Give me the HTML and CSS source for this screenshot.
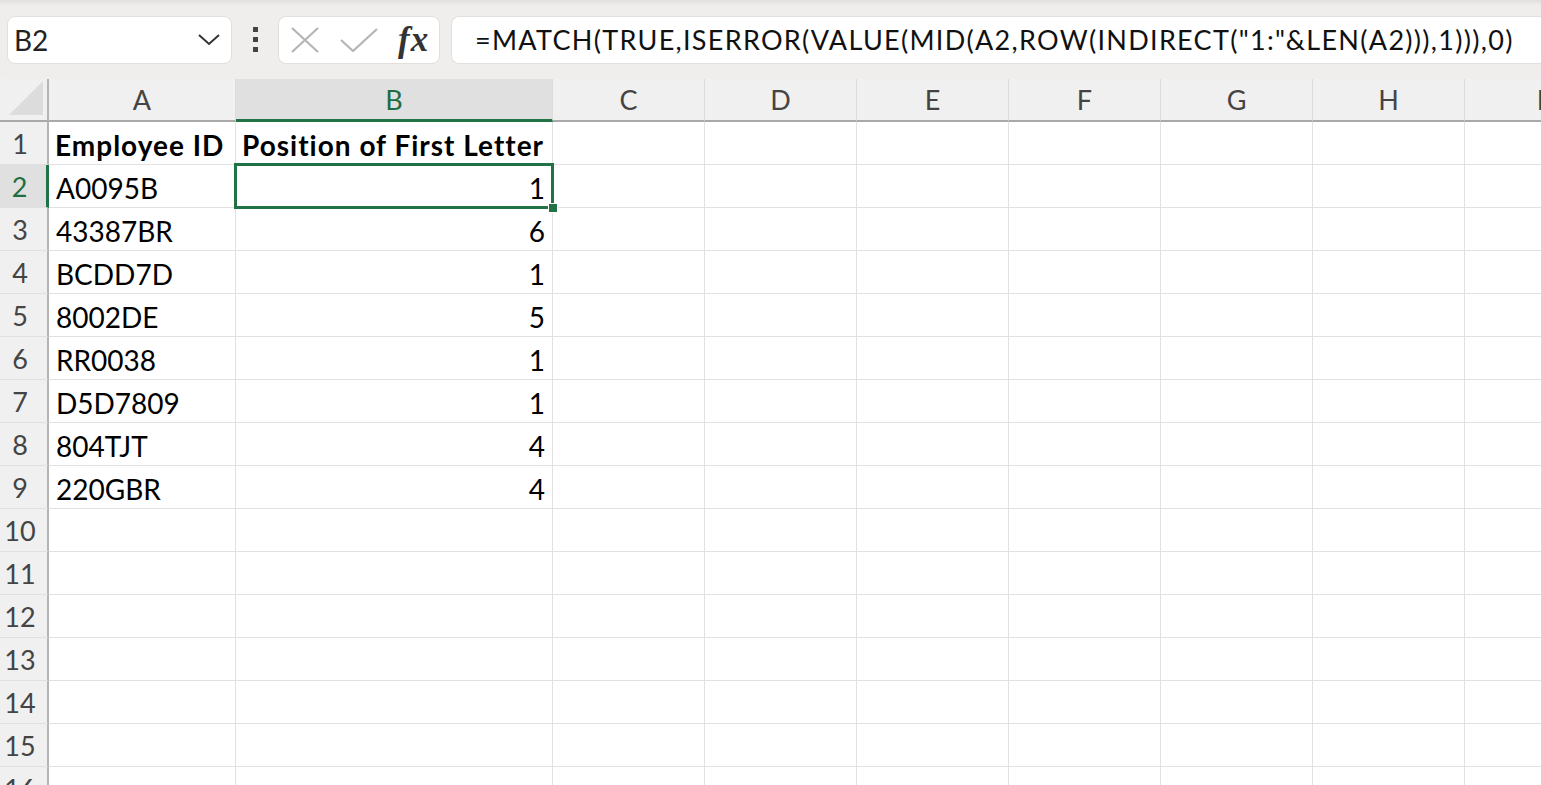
FILE: index.html
```html
<!DOCTYPE html>
<html lang="en">
<head>
    <meta charset="UTF-8">
    <title>Excel - Position of First Letter</title>
    <link rel="stylesheet" href="styles.css">
</head>
<body>

    <!-- Formula bar -->
    <div class="toolbar">
        <div class="name-box">
            <span>B2</span>
            <svg width="22" height="12" viewBox="0 0 22 12"><path d="M1 1 L11 10 L21 1" fill="none" stroke="#333" stroke-width="2"/></svg>
        </div>
        <div class="dots"><i></i><i></i><i></i></div>
        <div class="fx-box">
            <svg width="30" height="26" viewBox="0 0 30 26"><path d="M2 1 L28 25 M28 1 L2 25" stroke="#b5b5b5" stroke-width="2.2"/></svg>
            <svg width="38" height="24" viewBox="0 0 38 24"><path d="M1 12 L13 23 L37 1" fill="none" stroke="#b5b5b5" stroke-width="2.2"/></svg>
            <span class="fx">fx</span>
        </div>
        <div class="formula">=MATCH(TRUE,ISERROR(VALUE(MID(A2,ROW(INDIRECT("1:"&amp;LEN(A2))),1))),0)</div>
    </div>

    <!-- Sheet -->
    <div class="sheet" id="sheet"></div>

    <script>
        var cols = ['A', 'B', 'C', 'D', 'E', 'F', 'G', 'H', 'I'];
        var data = [
            ['Employee ID', 'Position of First Letter'],
            ['A0095B', 1],
            ['43387BR', 6],
            ['BCDD7D', 1],
            ['8002DE', 5],
            ['RR0038', 1],
            ['D5D7809', 1],
            ['804TJT', 4],
            ['220GBR', 4]
        ];
        var sheet = document.getElementById('sheet');
        var html = '<div class="row head"><div class="corner"><span></span></div>';
        cols.forEach(function (c) {
            html += '<div class="col-head' + (c === 'B' ? ' active' : '') + '">' + c + '</div>';
        });
        html += '</div>';

        for (var r = 1; r <= 16; r++) {
            var vals = data[r - 1] || [];
            html += '<div class="row"><div class="row-head' + (r === 2 ? ' active' : '') + '">' + r + '</div>';
            cols.forEach(function (c, i) {
                var v = vals[i];
                var cls = 'cell';
                if (r === 1 && v !== undefined) cls += ' bold';
                if (typeof v === 'number') cls += ' num';
                if (r === 2 && c === 'B') cls += ' selected';
                html += '<div class="' + cls + '">' + (v === undefined ? '' : v) + '</div>';
            });
            html += '</div>';
        }
        sheet.innerHTML = html;
    </script>

</body>
</html>
```

FILE: styles.css
```css
body {
    margin: 0;
    padding: 0;
    font-family: Lato, "Open Sans", sans-serif;
    background-color: #fff;
    overflow: hidden;
    width: 1541px;
    height: 785px;
}
.toolbar {
    height: 79px;
    background-color: #f0eeec;
    box-shadow: inset 0 5px 4px -3px rgba(0, 0, 0, 0.08);
    display: flex;
    align-items: center;
    padding-left: 7px;
    box-sizing: border-box;
}
.name-box {
    width: 225px;
    height: 48px;
    background-color: #fff;
    border: 1px solid #e3e0dc;
    border-radius: 8px;
    box-sizing: border-box;
    display: flex;
    align-items: center;
    justify-content: space-between;
    padding: 0 11px 0 6px;
    font-size: 28px;
    color: #222;
}
.dots {
    width: 46px;
    display: flex;
    flex-direction: column;
    align-items: center;
    gap: 5px;
}
.dots i {
    width: 5px;
    height: 5px;
    background-color: #444;
}
.fx-box {
    width: 162px;
    height: 48px;
    background-color: #fff;
    border: 1px solid #e3e0dc;
    border-radius: 8px;
    box-sizing: border-box;
    display: flex;
    align-items: center;
    padding-left: 11px;
    gap: 20px;
}
.fx {
    font-family: "Liberation Serif", "DejaVu Serif", serif;
    font-style: italic;
    font-weight: bold;
    font-size: 35px;
    color: #333;
    letter-spacing: 1px;
}
.formula {
    margin-left: 11px;
    flex: 1;
    height: 48px;
    background-color: #fff;
    border: 1px solid #e3e0dc;
    border-right: none;
    border-radius: 8px 0 0 8px;
    box-sizing: border-box;
    display: flex;
    align-items: center;
    padding-left: 23px;
    font-size: 27px;
    letter-spacing: 1.3px;
    color: #111;
    white-space: nowrap;
}
.sheet {
    overflow: hidden;
}
.row {
    display: flex;
    height: 43px;
}
.row > div {
    flex: 0 0 152px;
    box-sizing: border-box;
    height: 43px;
    border-right: 1px solid #e1e1e1;
    border-bottom: 1px solid #e1e1e1;
}
.row > div:nth-child(2) {
    flex-basis: 187px;
}
.row > div:nth-child(3) {
    flex-basis: 317px;
}
.head > div {
    background-color: #f0f0f0;
    border-bottom: 2px solid #a9a9a9;
    border-right-color: #dcdcdc;
}
.corner {
    position: relative;
}
.row > .corner,
.row > .row-head {
    flex-basis: 49px;
    border-right: 2px solid #b4b4b4;
}
.corner span {
    position: absolute;
    right: 4px;
    bottom: 5px;
    width: 0;
    height: 0;
    border-left: 34px solid transparent;
    border-bottom: 34px solid #dcdcdc;
}
.col-head,
.row-head {
    display: flex;
    align-items: center;
    justify-content: center;
    font-size: 27px;
    color: #444;
}
.row-head {
    background-color: #f0f0f0;
    border-bottom-color: #dcdcdc;
    padding-right: 7px;
}
.head > .active {
    background-color: #e0e0e0;
    color: #1e6e42;
    border-bottom: 3px solid #217346;
}
.row > .row-head.active {
    background-color: #e0e0e0;
    color: #1e6e42;
    border-right: 3px solid #217346;
}
.cell {
    display: flex;
    align-items: center;
    padding: 3px 7px 0;
    font-size: 28px;
    color: #000;
    white-space: nowrap;
}
.bold {
    font-weight: bold;
    letter-spacing: 1px;
    padding-left: 6px;
}
.num {
    justify-content: flex-end;
}
.selected {
    position: relative;
}
.selected::after {
    content: "";
    position: absolute;
    left: -2px;
    top: -2px;
    right: -2px;
    bottom: -2px;
    border: 3px solid #217346;
}
.selected::before {
    content: "";
    position: absolute;
    right: -6px;
    bottom: -6px;
    width: 8px;
    height: 8px;
    background-color: #217346;
    border: 1px solid #fff;
    z-index: 1;
}
```
